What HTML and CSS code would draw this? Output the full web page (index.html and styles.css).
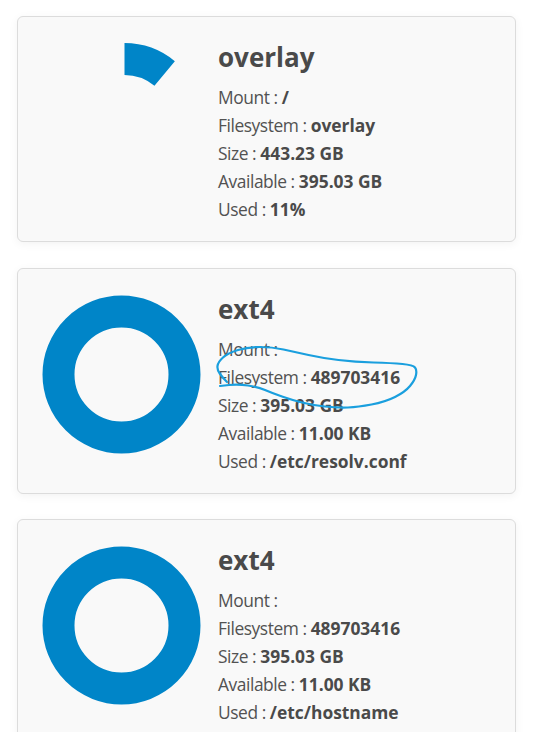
FILE: index.html
```html
<!DOCTYPE html>
<html lang="en">
<head>
<meta charset="utf-8">
<title>Disks</title>
<link rel="stylesheet" href="styles.css">
</head>
<body>
<div class="page">
  <div class="cards">
    <div class="card">
      <svg class="chart" viewBox="0 0 160 160" width="160" height="160">
        <path class="seg" d="M82.5,1 A79,79 0 0 1 132.85,19.13 L112.46,43.79 A47,47 0 0 0 82.5,33 Z"/>
      </svg>
      <div class="info">
        <h2 class="name">overlay</h2>
        <div class="row">Mount : <b>/</b></div>
        <div class="row">Filesystem : <b>overlay</b></div>
        <div class="row">Size : <b>443.23 GB</b></div>
        <div class="row">Available : <b>395.03 GB</b></div>
        <div class="row">Used : <b>11%</b></div>
      </div>
    </div>
    <div class="card">
      <svg class="chart" viewBox="0 0 160 160" width="160" height="160">
        <circle class="ring" cx="79.5" cy="80.5" r="63" />
      </svg>
      <div class="info">
        <h2 class="name">ext4</h2>
        <div class="row">Mount : <b></b></div>
        <div class="row">Filesystem : <b>489703416</b></div>
        <div class="row">Size : <b>395.03 GB</b></div>
        <div class="row">Available : <b>11.00 KB</b></div>
        <div class="row">Used : <b>/etc/resolv.conf</b></div>
      </div>
    </div>
    <div class="card">
      <svg class="chart" viewBox="0 0 160 160" width="160" height="160">
        <circle class="ring" cx="79.5" cy="80.5" r="63" />
      </svg>
      <div class="info">
        <h2 class="name">ext4</h2>
        <div class="row">Mount : <b></b></div>
        <div class="row">Filesystem : <b>489703416</b></div>
        <div class="row">Size : <b>395.03 GB</b></div>
        <div class="row">Available : <b>11.00 KB</b></div>
        <div class="row">Used : <b>/etc/hostname</b></div>
      </div>
    </div>
  </div>
  <svg class="annotation" viewBox="0 0 537 732" width="537" height="732">
    <path d="M220,386 L229,385 Q238,384 248,385.5 Q258,387 265,390 Q272,393 282,396.5 Q292,400 302,402.5 Q312,405 325,406.5 Q338,408 348,407.5 Q358,407 371.5,404.5 Q385,402 395,397 Q405,392 410,386 Q415,380 416,375 Q417,370 415,367.5 Q413,365 402.5,364 Q392,363 373.5,362.5 Q355,362 338.5,360 Q322,358 308.5,355 Q295,352 283.5,349.5 Q272,347 260,347 Q248,347 238,350 Q228,353 223,357.5 Q218,362 217.5,366 Q217,370 220,374 Q223,378 227,382"/>
  </svg>
</div>
</body>
</html>
```
FILE: styles.css
```css
html, body {
  margin: 0;
  padding: 0;
  background: #ffffff;
}

body {
  font-family: "Open Sans", "Noto Sans", sans-serif;
  color: #525252;
}

.page {
  position: relative;
  width: 537px;
  min-height: 732px;
  overflow: hidden;
}

.cards {
  display: flex;
  flex-direction: column;
  gap: 25.5px;
  padding: 16px 21px 0 17px;
}

.card {
  display: flex;
  align-items: flex-start;
  height: 199px;
  padding: 25px 0 0 24px;
  box-sizing: content-box;
  background: #f9f9f9;
  border: 1px solid #dcdcdc;
  border-radius: 6px;
  box-shadow: 0 2px 10px rgba(0, 0, 0, 0.05);
}

.chart {
  flex: none;
  display: block;
}

.seg {
  fill: #0085c8;
}

.ring {
  fill: none;
  stroke: #0085c8;
  stroke-width: 32;
}

.info {
  margin-left: 16px;
}

.name {
  margin: 0 0 10px 0;
  font-size: 26px;
  line-height: 31px;
  font-weight: 700;
  color: #4a4a4a;
}

.row {
  font-size: 17.4px;
  line-height: 28px;
  letter-spacing: -0.45px;
  white-space: nowrap;
}

.row b {
  font-weight: 700;
  letter-spacing: 0;
  color: #4a4a4a;
}

.annotation {
  position: absolute;
  top: 0;
  left: 0;
  pointer-events: none;
  fill: none;
  stroke: #1a9fde;
  stroke-width: 2.2;
  stroke-linecap: round;
  stroke-linejoin: round;
}
```
